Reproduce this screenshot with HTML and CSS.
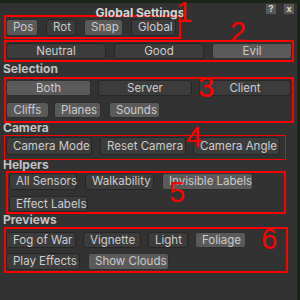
FILE: index.html
```html
<!DOCTYPE html>
<html>
<head>
<meta charset="utf-8">
<link rel="stylesheet" href="styles.css">
</head>
<body>
<div class="window">
  <div class="titlebar">
    <span class="title">Global Settings</span>
    <div class="tools">
      <span class="tool">?</span>
      <span class="tool">x</span>
    </div>
  </div>

  <div class="box box1">
    <button class="btn on">Pos</button>
    <button class="btn">Rot</button>
    <button class="btn on">Snap</button>
    <button class="btn">Global</button>
  </div>

  <div class="box box2">
    <button class="btn">Neutral</button>
    <button class="btn">Good</button>
    <button class="btn on">Evil</button>
  </div>

  <div class="header">Selection</div>
  <div class="box box3">
    <div class="row thirds">
      <button class="btn on">Both</button>
      <button class="btn">Server</button>
      <button class="btn">Client</button>
    </div>
    <div class="row">
      <button class="btn on">Cliffs</button>
      <button class="btn on">Planes</button>
      <button class="btn on">Sounds</button>
    </div>
  </div>

  <div class="header hcam">Camera</div>
  <div class="box box4">
    <button class="btn">Camera Mode</button>
    <button class="btn">Reset Camera</button>
    <button class="btn">Camera Angle</button>
  </div>

  <div class="header hhelp">Helpers</div>
  <div class="box box5">
    <div class="row">
      <button class="btn">All Sensors</button>
      <button class="btn">Walkability</button>
      <button class="btn on">Invisible Labels</button>
    </div>
    <div class="row">
      <button class="btn">Effect Labels</button>
    </div>
  </div>

  <div class="header hprev">Previews</div>
  <div class="box box6">
    <div class="row">
      <button class="btn">Fog of War</button>
      <button class="btn">Vignette</button>
      <button class="btn">Light</button>
      <button class="btn on">Foliage</button>
    </div>
    <div class="row">
      <button class="btn">Play Effects</button>
      <button class="btn on">Show Clouds</button>
    </div>
  </div>

  <span class="num n1">1</span>
  <span class="num n2">2</span>
  <span class="num n3">3</span>
  <span class="num n4">4</span>
  <span class="num n5">5</span>
  <span class="num n6">6</span>
</div>
</body>
</html>
```

FILE: styles.css
```css
html, body {
  margin: 0;
  padding: 0;
  background: #1c2419;
  width: 300px;
  height: 300px;
  overflow: hidden;
}
.window {
  position: relative;
  width: 297px;
  height: 297px;
  margin-top: 3px;
  background: #323232;
  font-family: Inter, "Noto Sans", sans-serif;
  font-size: 11.5px;
  color: #cfcfcf;
  display: flex;
  flex-direction: column;
  align-items: flex-start;
}
.titlebar {
  position: relative;
  width: 100%;
  height: 12px;
  display: flex;
  justify-content: center;
  align-items: center;
}
.title {
  font-weight: 700;
  font-size: 12px;
  color: #d4d4d4;
  margin-top: 6px;
  margin-left: -17px;
}
.tools {
  position: absolute;
  right: 3px;
  top: 1px;
  display: flex;
  gap: 8px;
}
.tool {
  width: 10px;
  height: 10px;
  background: #585858;
  color: #d8d8d8;
  font-size: 9px;
  line-height: 10px;
  text-align: center;
  font-weight: 700;
}
.box {
  border: 2px solid #ff0000;
  box-sizing: border-box;
  margin-left: 4px;
  display: flex;
  gap: 8px;
}
.btn {
  font: inherit;
  color: #cdcdcd;
  background: #3c3c3c;
  border: 1px solid #262626;
  border-radius: 3px;
  padding: 0 6px;
  height: 17px;
  line-height: 15px;
  margin: 0;
  white-space: nowrap;
}
.btn.on {
  background: #5a5a5a;
  border-color: #2e2e2e;
  color: #cbcbcb;
}
.box1 {
  width: 177px;
  height: 24px;
  padding: 2px 0 0 0;
}
.box1 .btn:nth-child(1) { width: 32px; }
.box1 .btn:nth-child(2) { width: 30px; }
.box1 .btn:nth-child(3) { width: 39px; }
.box1 .btn:nth-child(4) { width: 45px; }
.box2 {
  width: 290px;
  height: 22px;
  margin-top: 1px;
  padding: 1px 0 0 0;
}
.box2 .btn { height: 16px; line-height: 14px; }
.box2 .btn:nth-child(1) { width: 100px; }
.box2 .btn:nth-child(2) { width: 90px; }
.box2 .btn:nth-child(3) { width: 80px; }
.header {
  font-weight: 700;
  font-size: 12px;
  color: #c2c2c2;
  margin-left: 3px;
  height: 15px;
  line-height: 14px;
}
.box3 {
  width: 290px;
  height: 46px;
  flex-direction: column;
  gap: 6px;
  padding-top: 1px;
}
.row {
  display: flex;
  gap: 6px;
}
.box3 .btn { height: 16px; line-height: 14px; }
.thirds .btn:nth-child(1) { width: 85px; }
.thirds .btn:nth-child(2) { width: 94px; }
.thirds .btn:nth-child(3) { width: 92px; }
.thirds { gap: 7px; }
.box3 .row:nth-child(2) .btn:nth-child(1) { width: 43px; }
.box3 .row:nth-child(2) .btn:nth-child(2) { width: 47px; margin-left: -1px; }
.box3 .row:nth-child(2) .btn:nth-child(3) { width: 51px; margin-left: 2px; }
.hcam { margin-top: -1px; height: 13px; line-height: 12px; }
.box4 {
  width: 282px;
  height: 25px;
  border-width: 1px;
  padding: 1px 0 0 1px;
  gap: 8px;
}
.box4 .btn { height: 18px; line-height: 16px; }
.box4 .btn:nth-child(1) { width: 86px; }
.box4 .btn:nth-child(2) { width: 86px; }
.box4 .btn:nth-child(3) { width: 87px; margin-left: -1px; }
.hhelp { height: 11px; line-height: 10px; }
.box5 {
  width: 280px;
  height: 43px;
  margin-left: 6px;
  flex-direction: column;
  gap: 6px;
  padding: 0 0 0 1px;
}
.box5 .row { gap: 8px; }
.box5 .row:nth-child(2) .btn { height: 16px; line-height: 14px; }
.box5 .row:nth-child(1) .btn:nth-child(1) { width: 68px; }
.box5 .row:nth-child(1) .btn:nth-child(2) { width: 69px; }
.box5 .row:nth-child(1) .btn:nth-child(3) { width: 91px; }
.box5 .row:nth-child(2) .btn { width: 79px; }
.hprev { height: 13px; line-height: 12px; }
.box6 {
  width: 284px;
  height: 46px;
  flex-direction: column;
  gap: 5px;
  padding-top: 3px;
}
.box6 .row { gap: 7px; }
.box6 .row:nth-child(1) .btn { height: 16px; line-height: 14px; }
.box6 .row:nth-child(1) .btn:nth-child(1) { width: 70px; }
.box6 .row:nth-child(1) .btn:nth-child(2) { width: 58px; }
.box6 .row:nth-child(1) .btn:nth-child(3) { width: 40px; }
.box6 .row:nth-child(1) .btn:nth-child(4) { width: 51px; }
.box6 .row:nth-child(2) .btn:nth-child(1) { width: 74px; }
.box6 .row:nth-child(2) .btn:nth-child(2) { width: 81px; margin-left: 1px; }
.num {
  position: absolute;
  color: #ff0000;
  font-family: "Liberation Sans", Arial, sans-serif;
  font-size: 29px;
  line-height: 1;
}
.n1 { left: 176px; top: -5px; }
.n2 { left: 230px; top: 15px; }
.n3 { left: 198px; top: 70px; }
.n4 { left: 186px; top: 120px; }
.n5 { left: 169px; top: 175px; }
.n6 { left: 261px; top: 222px; }
```
